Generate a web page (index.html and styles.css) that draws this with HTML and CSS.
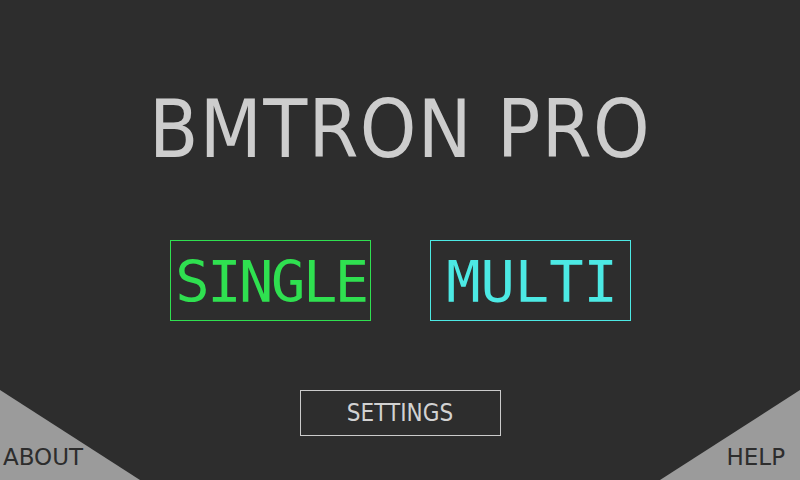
FILE: index.html
```html
<!DOCTYPE html>
<html lang="en">
<head>
    <meta charset="UTF-8">
    <meta name="viewport" content="width=device-width, initial-scale=1.0">
    <title>BMTRON PRO</title>
    <link rel="stylesheet" href="styles.css">
</head>
<body>
    <div class="screen">
        <h1 class="title">BMTRON PRO</h1>

        <div class="modes">
            <button class="mode single">SINGLE</button>
            <button class="mode multi">MULTI</button>
        </div>

        <div class="footer">
            <button class="corner about">ABOUT</button>
            <button class="settings">SETTINGS</button>
            <button class="corner help">HELP</button>
        </div>
    </div>
</body>
</html>
```

FILE: styles.css
```css
body {
    margin: 0;
    padding: 0;
    background-color: #2d2d2d;
    font-family: 'DejaVu Sans Condensed', 'DejaVu Sans', sans-serif;
}

.screen {
    width: 800px;
    height: 480px;
    display: flex;
    flex-direction: column;
    overflow: hidden;
}

button {
    font-family: inherit;
    background: none;
    padding: 0;
    margin: 0;
    cursor: pointer;
}

.title {
    margin: 0;
    padding-top: 90px;
    font-size: 80px;
    line-height: 80px;
    font-weight: normal;
    letter-spacing: 1.3px;
    text-align: center;
    color: #cdcdcd;
}

.modes {
    display: flex;
    justify-content: center;
    gap: 59px;
    margin-top: 70px;
}

.mode {
    box-sizing: border-box;
    width: 201px;
    height: 81px;
    padding-top: 3px;
    font-family: 'DejaVu Sans Mono', monospace;
    font-size: 57px;
    line-height: 76px;
    border: 1px solid;
}

.single {
    color: #2fe050;
    border-color: #2fe050;
    letter-spacing: -2.4px;
    padding-left: 2px;
}

.multi {
    color: #4ce9e4;
    border-color: #4ce9e4;
    padding-left: 4px;
}

.footer {
    display: flex;
    justify-content: space-between;
    align-items: flex-start;
    margin-top: 69px;
    flex: 1;
}

.settings {
    box-sizing: border-box;
    width: 201px;
    height: 46px;
    border: 1px solid #cbcbcb;
    color: #d2d2d2;
    font-size: 24px;
    line-height: 44px;
}

.corner {
    box-sizing: border-box;
    width: 140px;
    height: 90px;
    border: none;
    background-color: #9b9b9b;
    color: #2d2d2d;
    font-family: 'DejaVu Sans', sans-serif;
    font-size: 23px;
    line-height: 23px;
    display: flex;
    align-items: flex-end;
    padding-bottom: 11px;
}

.about {
    clip-path: polygon(0 0, 100% 100%, 0 100%);
    justify-content: flex-start;
    padding-left: 3px;
}

.help {
    clip-path: polygon(100% 0, 100% 100%, 0 100%);
    justify-content: flex-end;
    padding-right: 15px;
}
```
